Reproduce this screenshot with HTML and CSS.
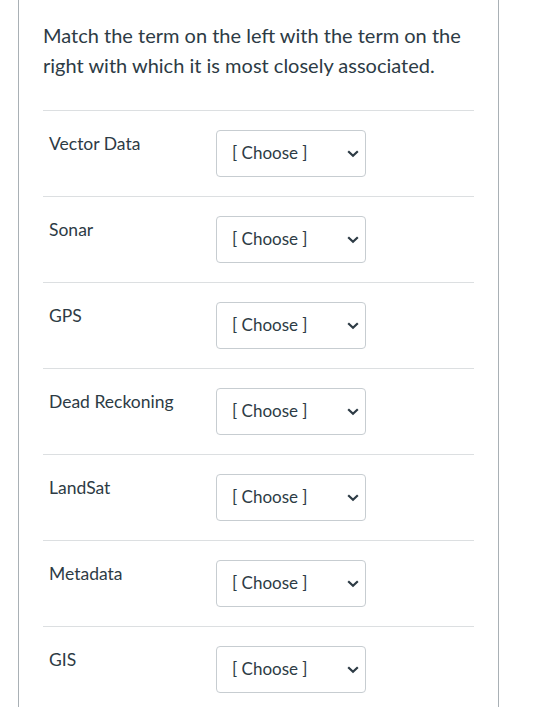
FILE: index.html
```html
<!DOCTYPE html>
<html lang="en">
<head>
<meta charset="utf-8">
<title>Matching question</title>
<link rel="stylesheet" href="styles.css">
</head>
<body>
<div class="card">
  <p class="prompt">Match the term on the left with the term on the right with which it is most closely associated.</p>
  <div class="rows">
    <div class="row"><div class="label">Vector Data</div><div class="select"><span>[ Choose ]</span><svg class="chev" width="12" height="8" viewBox="0 0 12 8"><path d="M1.2 1.2 L6 5.8 L10.8 1.2" fill="none" stroke="#2d3b45" stroke-width="2.2"/></svg></div></div>
    <div class="row"><div class="label">Sonar</div><div class="select"><span>[ Choose ]</span><svg class="chev" width="12" height="8" viewBox="0 0 12 8"><path d="M1.2 1.2 L6 5.8 L10.8 1.2" fill="none" stroke="#2d3b45" stroke-width="2.2"/></svg></div></div>
    <div class="row"><div class="label">GPS</div><div class="select"><span>[ Choose ]</span><svg class="chev" width="12" height="8" viewBox="0 0 12 8"><path d="M1.2 1.2 L6 5.8 L10.8 1.2" fill="none" stroke="#2d3b45" stroke-width="2.2"/></svg></div></div>
    <div class="row"><div class="label">Dead Reckoning</div><div class="select"><span>[ Choose ]</span><svg class="chev" width="12" height="8" viewBox="0 0 12 8"><path d="M1.2 1.2 L6 5.8 L10.8 1.2" fill="none" stroke="#2d3b45" stroke-width="2.2"/></svg></div></div>
    <div class="row"><div class="label">LandSat</div><div class="select"><span>[ Choose ]</span><svg class="chev" width="12" height="8" viewBox="0 0 12 8"><path d="M1.2 1.2 L6 5.8 L10.8 1.2" fill="none" stroke="#2d3b45" stroke-width="2.2"/></svg></div></div>
    <div class="row"><div class="label">Metadata</div><div class="select"><span>[ Choose ]</span><svg class="chev" width="12" height="8" viewBox="0 0 12 8"><path d="M1.2 1.2 L6 5.8 L10.8 1.2" fill="none" stroke="#2d3b45" stroke-width="2.2"/></svg></div></div>
    <div class="row"><div class="label">GIS</div><div class="select"><span>[ Choose ]</span><svg class="chev" width="12" height="8" viewBox="0 0 12 8"><path d="M1.2 1.2 L6 5.8 L10.8 1.2" fill="none" stroke="#2d3b45" stroke-width="2.2"/></svg></div></div>
  </div>
</div>
</body>
</html>
```
FILE: styles.css
```css
html, body {
  margin: 0;
  padding: 0;
  background: #ffffff;
}
body {
  font-family: Lato, "Liberation Sans", sans-serif;
  color: #2d3b45;
  height: 707px;
  overflow: hidden;
}
.card {
  margin-left: 18px;
  width: 481px;
  min-height: 760px;
  border-left: 1px solid #a9b0b5;
  border-right: 1px solid #a9b0b5;
  padding: 20px 24px 0 24px;
  box-sizing: border-box;
}
.prompt {
  margin: 0 0 30px 0;
  font-size: 20px;
  line-height: 30px;
}
.row {
  display: flex;
  align-items: flex-start;
  border-top: 1px solid #dcdfe1;
  padding: 19px 0 19px 6px;
}
.label {
  width: 167px;
  font-size: 17.5px;
  line-height: 24px;
  margin-top: 2px;
}
.select {
  width: 150px;
  height: 47px;
  box-sizing: border-box;
  border: 1px solid #c7cdd1;
  border-radius: 4px;
  display: flex;
  align-items: center;
  justify-content: space-between;
  padding: 0 6px 3px 15px;
  font-size: 17px;
}
.chev {
  display: block;
  margin-top: 4px;
}
```
